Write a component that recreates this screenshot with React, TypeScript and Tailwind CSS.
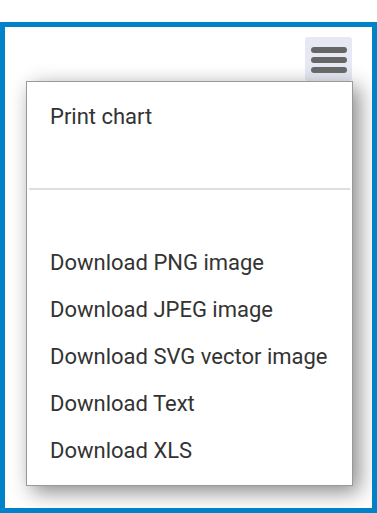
import React from "react";

const items: (string | null)[] = [
  "Print chart",
  "",
  null,
  "",
  "Download PNG image",
  "Download JPEG image",
  "Download SVG vector image",
  "Download Text",
  "Download XLS",
];

export default function App() {
  return (
    <div className="w-[377px] h-[513px] bg-white pt-[22px]" style={{ fontFamily: "Roboto, 'Liberation Sans', sans-serif" }}>
      <div className="h-[491px] border-[5px] border-[#0082c8] bg-white overflow-hidden flex flex-col">
        <div className="flex justify-end pt-[10px] pr-[20px]">
          <div className="w-[47px] h-[44px] rounded-[3px] bg-[#e6e9f4] flex items-start justify-center pt-[10px]">
            <svg width="36" height="28" viewBox="0 0 36 28">
              <g stroke="#666666" strokeWidth="6" strokeLinecap="round">
                <line x1="3" y1="3" x2="33" y2="3" />
                <line x1="3" y1="13" x2="33" y2="13" />
                <line x1="3" y1="23" x2="33" y2="23" />
              </g>
            </svg>
          </div>
        </div>
        <div className="ml-[21px] w-[327px] border border-[#999999] bg-white pt-[11px] pb-[11px] shadow-[6px_6px_20px_#888888]">
          {items.map((it, i) =>
            it === null ? (
              <div key={i} className="pt-[1px] pb-[2px] px-[2px]">
                <div className="h-[2px] bg-[#dedede]" />
              </div>
            ) : (
              <div key={i} className="h-[47px] flex items-center pl-[23px] text-[22px] text-[#333333] leading-normal whitespace-nowrap">
                {it}
              </div>
            )
          )}
        </div>
      </div>
    </div>
  );
}
